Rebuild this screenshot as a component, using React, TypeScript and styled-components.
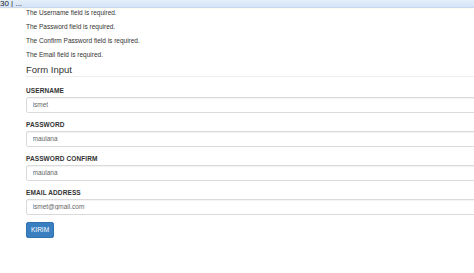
import * as React from 'react';
import styled, { createGlobalStyle } from 'styled-components';

const GlobalStyle = createGlobalStyle`
    html, body {
        margin: 0;
        padding: 0;
        background: #fff;
        overflow: hidden;
    }
    body {
        font-family: "Liberation Sans", Arial, sans-serif;
        color: #333;
    }
`;

const TopStrip = styled.div`
    height: 7px;
    overflow: hidden;
    display: flex;
    align-items: flex-end;
    background: linear-gradient(#e4eefa, #d6e4f6);
    border-bottom: 1px solid #c9d8ee;
    box-shadow: 0 1px 0 #fdfbef;
`;

const StripText = styled.span`
    font-size: 8px;
    line-height: 8px;
    color: #222;
    margin-bottom: -1px;
    white-space: nowrap;
`;

const Container = styled.div`
    width: 620px;
    padding: 0 0 0 26px;
`;

const ErrorText = styled.p`
    margin: 0 0 4.6px;
    font-size: 6.5px;
    line-height: 9.3px;
    color: #333;
`;

const PageHeader = styled.h3`
    margin: 5px 0 0;
    padding-bottom: 1px;
    font-size: 9.5px;
    line-height: 11px;
    font-weight: 400;
    color: #333;
    border-bottom: 1px solid #eee;
`;

const Form = styled.form`
    margin-top: 9px;
`;

const FormGroup = styled.div`
    margin-bottom: 7px;
`;

const Label = styled.label`
    display: block;
    margin-bottom: 2px;
    font-size: 6.5px;
    line-height: 9px;
    font-weight: 700;
    letter-spacing: 0.1px;
`;

const Input = styled.input`
    display: block;
    box-sizing: border-box;
    width: 100%;
    height: 16px;
    padding: 0 5.6px;
    font-family: "Liberation Sans", Arial, sans-serif;
    font-size: 6.5px;
    color: #666;
    background: #fff;
    border: 1px solid #dadada;
    border-radius: 2px;
    box-shadow: inset 0 1px 1px rgba(0, 0, 0, 0.05);
    outline: none;
`;

const SubmitButton = styled.button`
    display: block;
    height: 16px;
    padding: 0 4px;
    font-family: "Liberation Sans", Arial, sans-serif;
    font-size: 6.5px;
    color: #fff;
    background: #3a7fc0;
    border: 1px solid #3272ad;
    border-radius: 2px;
`;

const errors = [
    'The Username field is required.',
    'The Password field is required.',
    'The Confirm Password field is required.',
    'The Email field is required.',
];

const fields = [
    { label: 'USERNAME', value: 'ismet', type: 'text' },
    { label: 'PASSWORD', value: 'maulana', type: 'text' },
    { label: 'PASSWORD CONFIRM', value: 'maulana', type: 'text' },
    { label: 'EMAIL ADDRESS', value: 'ismet@gmail.com', type: 'email' },
];

const App = () => {
    return (
        <React.Fragment>
            <GlobalStyle />
            <TopStrip>
                <StripText>30 | ...</StripText>
            </TopStrip>
            <Container>
                {errors.map((e) => (
                    <ErrorText key={e}>{e}</ErrorText>
                ))}
                <PageHeader>Form Input</PageHeader>
                <Form onSubmit={(ev) => ev.preventDefault()}>
                    {fields.map((f) => (
                        <FormGroup key={f.label}>
                            <Label>{f.label}</Label>
                            <Input type={f.type} defaultValue={f.value} readOnly />
                        </FormGroup>
                    ))}
                    <SubmitButton type="submit">KIRIM</SubmitButton>
                </Form>
            </Container>
        </React.Fragment>
    );
};

export default App;
